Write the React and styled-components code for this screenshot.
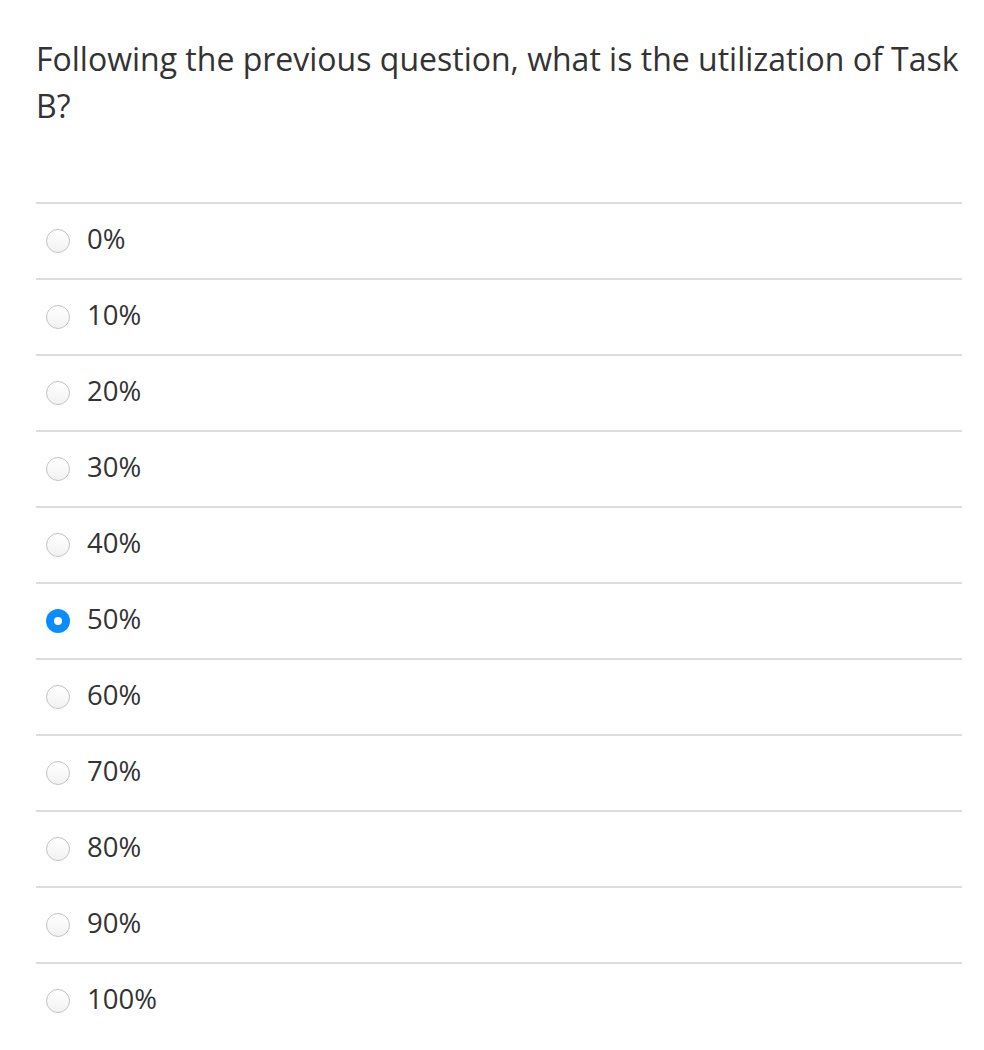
import React, { useState } from "react";
import styled, { createGlobalStyle } from "styled-components";

const Global = createGlobalStyle`
  body { margin: 0; background: #fff; font-family: "Open Sans", sans-serif; }
`;

const Page = styled.div`
  padding: 35px 22px 0 36px;
`;

const Question = styled.h1`
  margin: 0;
  font-family: "Open Sans", sans-serif;
  font-weight: 400;
  font-size: 32px;
  line-height: 47px;
  color: #333;
`;

const List = styled.div`
  margin-top: 73px;
  display: flex;
  flex-direction: column;
`;

const Row = styled.label`
  display: flex;
  align-items: center;
  height: 74px;
  border-top: 2px solid #dcdcdc;
  padding-left: 10px;
  gap: 17px;
  cursor: pointer;
`;

const Radio = styled.span`
  box-sizing: border-box;
  width: 24px;
  height: 24px;
  border-radius: 50%;
  flex: none;
  display: flex;
  align-items: center;
  justify-content: center;
  ${(p) =>
    p.$checked
      ? `background: #0a8cff; border: none;`
      : `background: linear-gradient(#fff, #f2f2f2); border: 1px solid #c4c4c4;`}
`;

const Dot = styled.span`
  width: 8px;
  height: 8px;
  border-radius: 50%;
  background: #fff;
`;

const Label = styled.span`
  font-family: "Open Sans", sans-serif;
  font-size: 27.5px;
  line-height: 38px;
  padding-bottom: 5px;
  color: #333;
`;

const options = ["0%", "10%", "20%", "30%", "40%", "50%", "60%", "70%", "80%", "90%", "100%"];

export default function App() {
  const [sel, setSel] = useState("50%");
  return (
    <Page>
      <Global />
      <Question>Following the previous question, what is the utilization of Task B?</Question>
      <List>
        {options.map((o) => (
          <Row key={o} onClick={() => setSel(o)}>
            <Radio $checked={sel === o}>{sel === o && <Dot />}</Radio>
            <Label>{o}</Label>
          </Row>
        ))}
      </List>
    </Page>
  );
}
